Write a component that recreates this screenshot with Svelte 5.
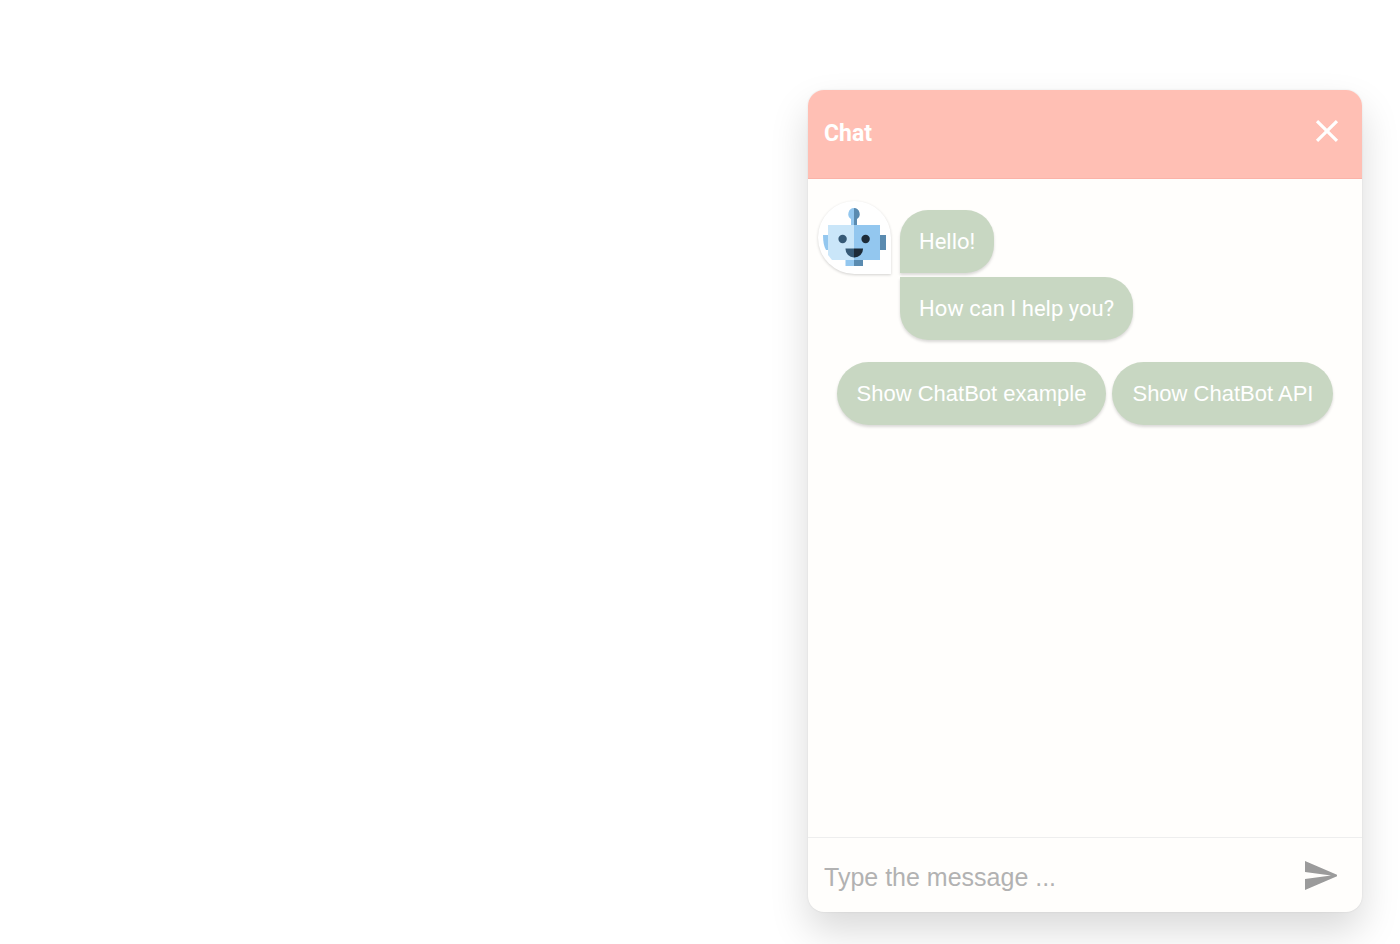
<script>
  let open = $state(true);
  let message = $state('');

  const messages = ['Hello!', 'How can I help you?'];
  const options = ['Show ChatBot example', 'Show ChatBot API'];
</script>

<main class="page">
  {#if open}
    <section class="chat" aria-label="Chat">
      <header class="header">
        <h2 class="title">Chat</h2>
        <button class="icon-btn" aria-label="Close chat" onclick={() => (open = false)}>
          <svg width="38" height="38" viewBox="0 0 24 24" fill="#fff" aria-hidden="true">
            <path d="M19 6.41L17.59 5 12 10.59 6.41 5 5 6.41 10.59 12 5 17.59 6.41 19 12 13.41 17.59 19 19 17.59 13.41 12z" />
          </svg>
        </button>
      </header>

      <div class="content">
        <div class="thread">
          <div class="avatar">
            <svg width="73" height="73" viewBox="0 0 73 73" role="img" aria-label="Bot">
              <path d="M5 34h6v15H8q-3-5-3-15z" fill="#93c7ef" />
              <path d="M62 34h6v15h-6z" fill="#5a8bb0" />
              <path d="M36 7a6 6 0 0 0-3 11v7h3z" fill="#93c7ef" />
              <path d="M36 7a6 6 0 0 1 3 11v7h-3z" fill="#5a8bb0" />
              <path d="M10 24h26v35H14l-4-5z" fill="#cae6f9" />
              <path d="M36 24h26v35H36z" fill="#93c7ef" />
              <circle cx="24.6" cy="38" r="4.2" fill="#365a77" />
              <circle cx="47.6" cy="38" r="4.2" fill="#1d2b38" />
              <path d="M27.5 47.5H36v9a8.5 8.5 0 0 1-8.5-9z" fill="#365a77" />
              <path d="M36 47.5h9a8.5 8.5 0 0 1-9 9z" fill="#1d2b38" />
              <path d="M27.5 59H36v6h-8.5z" fill="#93c7ef" />
              <path d="M36 59h9v6h-9z" fill="#5a8bb0" />
            </svg>
          </div>
          <div class="bubbles">
            {#each messages as text}
              <p class="bubble">{text}</p>
            {/each}
          </div>
        </div>

        <div class="options">
          {#each options as option}
            <button class="option">{option}</button>
          {/each}
        </div>
      </div>

      <form class="footer" onsubmit={(e) => e.preventDefault()}>
        <input class="input" type="text" placeholder="Type the message ..." aria-label="Message" bind:value={message} />
        <button class="icon-btn" type="submit" aria-label="Send">
          <svg width="32" height="29" viewBox="0 0 32 29" fill="#9b9b9b" aria-hidden="true">
            <path d="M0 0L32 13.8v1.4L0 29V18l26-3.5L0 11z" />
          </svg>
        </button>
      </form>
    </section>
  {/if}
</main>

<style>
  :global(body) {
    margin: 0;
    background: #fff;
  }

  .page {
    box-sizing: border-box;
    display: flex;
    justify-content: flex-end;
    min-height: 100vh;
    padding: 90px 38px 32px;
    overflow: hidden;
    font-family: Roboto, sans-serif;
  }

  .chat {
    display: flex;
    flex-direction: column;
    width: 100%;
    max-width: 554px;
    border-radius: 16px;
    background: #fffefc;
    box-shadow: 0 19px 38px rgba(0, 0, 0, 0.15), 0 0 2px rgba(0, 0, 0, 0.1);
    overflow: hidden;
  }

  .header {
    display: flex;
    align-items: flex-start;
    justify-content: space-between;
    padding: 22px 16px 28px;
    background: #ffbfb4;
    border-bottom: 1px solid #fbb3a8;
  }

  .title {
    margin: 0;
    padding-top: 8px;
    color: #fff;
    font-size: 23px;
    font-weight: 700;
    line-height: 28px;
  }

  .icon-btn {
    display: flex;
    padding: 0;
    border: none;
    background: none;
    cursor: pointer;
  }

  .content {
    flex: 1;
    padding: 22px 10px;
  }

  .thread {
    display: flex;
    align-items: flex-start;
    gap: 9px;
  }

  .avatar {
    display: flex;
    border-radius: 50% 50% 0 50%;
    background: #fff;
    box-shadow: 0 1px 3px rgba(0, 0, 0, 0.18);
  }

  .bubbles {
    display: flex;
    flex-direction: column;
    align-items: flex-start;
    gap: 4px;
    padding-top: 9px;
  }

  .bubble,
  .option {
    margin: 0;
    padding: 19px;
    background: #c8d7c2;
    color: #fff;
    font-size: 22px;
    line-height: 25px;
    box-shadow: 0 2px 3px rgba(0, 0, 0, 0.15);
  }

  .bubble {
    border-radius: 28px 28px 28px 0;
  }

  .bubble:last-child {
    border-radius: 0 28px 28px 28px;
  }

  .options {
    display: flex;
    flex-wrap: wrap;
    justify-content: center;
    gap: 6px;
    padding-top: 22px;
  }

  .option {
    padding: 19px 20px;
    border: none;
    border-radius: 32px;
    font-family: "Liberation Sans", Arial, sans-serif;
    cursor: pointer;
  }

  .footer {
    display: flex;
    align-items: center;
    height: 75px;
    padding: 0 25px 0 16px;
    border-top: 1px solid #eee;
    box-sizing: border-box;
  }

  .input {
    flex: 1;
    min-width: 0;
    padding: 4px 0 0;
    border: none;
    outline: none;
    background: none;
    color: #4a4a4a;
    font-family: "Liberation Sans", Arial, sans-serif;
    font-size: 25px;
  }

  .input::placeholder {
    color: #b2b2b2;
    opacity: 1;
  }
</style>
